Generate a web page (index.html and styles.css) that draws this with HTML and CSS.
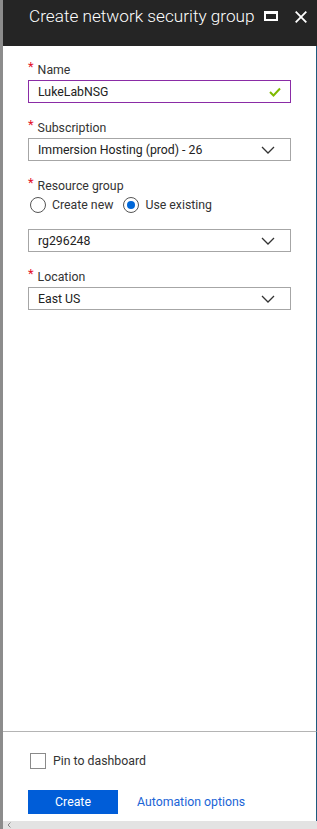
FILE: index.html
```html
<!DOCTYPE html>
<html lang="en">
<head>
    <meta charset="UTF-8">
    <meta name="viewport" content="width=device-width, initial-scale=1.0">
    <title>Create network security group</title>
    <link rel="stylesheet" href="styles.css">
</head>
<body>
    <div class="blade">
        <div class="blade-header">
            <h2>Create network security group</h2>
            <span class="icon-max"></span>
            <svg class="icon-close" width="12" height="12" viewBox="0 0 12 12">
                <path d="M0.7 0.7 L11.3 11.3 M11.3 0.7 L0.7 11.3" stroke="#fff" stroke-width="1.8" fill="none"/>
            </svg>
        </div>

        <div class="blade-content">
            <div class="field">
                <label><span class="req">*</span>Name</label>
                <div class="input valid">
                    <span>LukeLabNSG</span>
                    <svg width="12" height="10" viewBox="0 0 12 10">
                        <path d="M1 5 L4.5 8.5 L11 1.5" stroke="#7fba00" stroke-width="2" fill="none"/>
                    </svg>
                </div>
            </div>

            <div class="field">
                <label><span class="req">*</span>Subscription</label>
                <div class="input select">
                    <span>Immersion Hosting (prod) - 26</span>
                    <svg class="chev" width="14" height="8" viewBox="0 0 14 8">
                        <path d="M1 1 L7 7 L13 1" stroke="#333" stroke-width="1.3" fill="none"/>
                    </svg>
                </div>
            </div>

            <div class="field">
                <label><span class="req">*</span>Resource group</label>
                <div class="radios">
                    <span class="radio"><i class="circle"></i>Create new</span>
                    <span class="radio checked"><i class="circle"></i>Use existing</span>
                </div>
                <div class="input select spaced">
                    <span>rg296248</span>
                    <svg class="chev" width="14" height="8" viewBox="0 0 14 8">
                        <path d="M1 1 L7 7 L13 1" stroke="#333" stroke-width="1.3" fill="none"/>
                    </svg>
                </div>
            </div>

            <div class="field">
                <label><span class="req">*</span>Location</label>
                <div class="input select">
                    <span>East US</span>
                    <svg class="chev" width="14" height="8" viewBox="0 0 14 8">
                        <path d="M1 1 L7 7 L13 1" stroke="#333" stroke-width="1.3" fill="none"/>
                    </svg>
                </div>
            </div>
        </div>

        <div class="blade-footer">
            <div class="pin"><i class="box"></i>Pin to dashboard</div>
            <div class="actions">
                <button class="btn-create">Create</button>
                <a class="link" href="#">Automation options</a>
            </div>
        </div>

        <div class="hscroll">
            <svg width="4" height="6" viewBox="0 0 4 6">
                <path d="M3.5 0.5 L1 3 L3.5 5.5" stroke="#888" stroke-width="1" fill="none"/>
            </svg>
        </div>
    </div>
</body>
</html>
```

FILE: styles.css
```css
body {
    margin: 0;
    font-family: "Segoe UI", Roboto, sans-serif;
    font-size: 12.3px;
    color: #333;
    background: #fff;
}
.blade {
    height: 829px;
    display: flex;
    flex-direction: column;
    border-left: 3px solid #8c8c8c;
    box-sizing: border-box;
    overflow: hidden;
}
.blade-header {
    height: 46px;
    background: #252525;
    display: flex;
    align-items: flex-start;
    padding: 5px 10px 0 26px;
    box-sizing: border-box;
    color: #fff;
}
.blade-header h2 {
    margin: 0;
    font-weight: 300;
    font-size: 17.2px;
    line-height: 22px;
    flex: 1;
    min-width: 0;
    white-space: nowrap;
    overflow: hidden;
}
.icon-max {
    flex-shrink: 0;
    width: 10px;
    height: 5px;
    border: 2px solid #fff;
    border-top-width: 3px;
    margin: 6px 17px 0 0;
}
.icon-close {
    flex-shrink: 0;
    margin-top: 6px;
}
.blade-content {
    flex: 1;
    padding: 16px 25px 0 25px;
    border-right: 1px solid #1d5b7f;
}
.field {
    margin-bottom: 17px;
}
.field label {
    display: block;
    height: 16px;
    line-height: 16px;
    margin-bottom: 2px;
}
.req {
    color: #e3102a;
    margin: 0 4px 0 0;
    font-size: 13px;
    vertical-align: top;
    position: relative;
    top: -3px;
}
.input {
    height: 23px;
    border: 1px solid #a6a6a6;
    box-sizing: border-box;
    display: flex;
    align-items: center;
    justify-content: space-between;
    padding: 0 9px 0 9px;
    color: #222;
}
.input.valid {
    border-color: #8a2ca6;
}
.chev {
    margin-right: 6px;
}
.input.spaced {
    margin-top: 15px;
}
.radios {
    display: flex;
    align-items: center;
    height: 18px;
    gap: 8px;
}
.radio {
    display: flex;
    align-items: center;
    gap: 6px;
}
.circle {
    width: 16px;
    height: 16px;
    border: 1px solid #555;
    border-radius: 50%;
    box-sizing: border-box;
    margin-left: 2px;
    position: relative;
}
.checked .circle::after {
    content: "";
    position: absolute;
    left: 3px;
    top: 3px;
    width: 8px;
    height: 8px;
    border-radius: 50%;
    background: #0067d8;
}
.blade-footer {
    border-top: 1px solid #b4b4b4;
    border-right: 1px solid #1d5b7f;
    padding: 21px 25px 7px 25px;
}
.pin {
    display: flex;
    align-items: center;
    gap: 7px;
    height: 16px;
}
.box {
    width: 16px;
    height: 16px;
    border: 1px solid #8a8a8a;
    box-sizing: border-box;
    margin-left: 2px;
}
.actions {
    display: flex;
    align-items: center;
    margin-top: 21px;
}
.btn-create {
    width: 90px;
    height: 24px;
    border: none;
    background: #005dd8;
    color: #fff;
    font-family: inherit;
    font-size: 12.3px;
    padding: 0;
}
.link {
    margin-left: 19px;
    color: #1a64d6;
    text-decoration: none;
}
.hscroll {
    height: 8px;
    background: #e3e3e3;
    display: flex;
    align-items: center;
    padding-left: 4px;
}
```
